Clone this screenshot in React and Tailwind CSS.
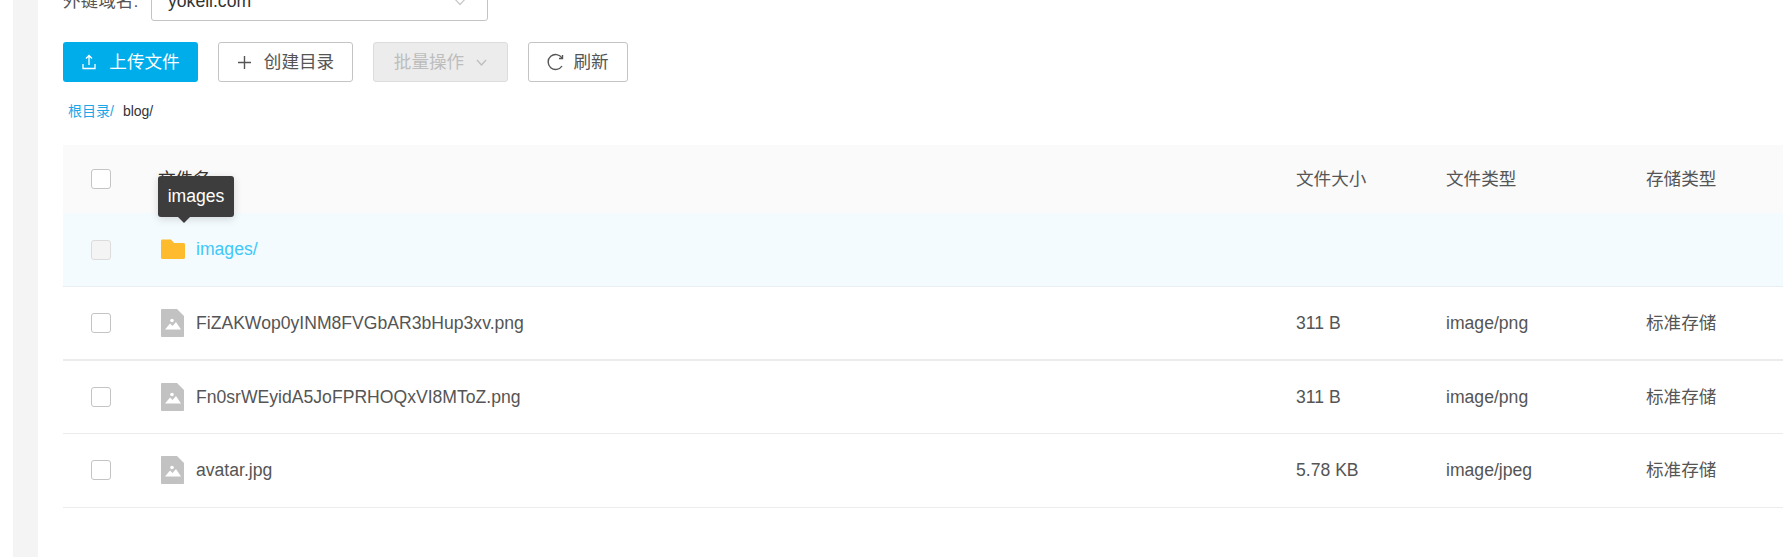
const sans = { };
function Check({ disabled }) {
  return <span className={`block w-5 h-5 rounded-[3px] border ${disabled ? "bg-[#f4f4f4] border-[#dcdcdc]" : "bg-white border-[#c4c4c4]"}`} />;
}
function FolderIcon() {
  return (
    <svg width="24" height="20" viewBox="0 0 24 20" className="shrink-0">
      <path d="M1.5 0.5H10L13 4H22.5C23.3 4 24 4.7 24 5.5V18.5C24 19.3 23.3 20 22.5 20H1.5C0.7 20 0 19.3 0 18.5V2C0 1.2 0.7 0.5 1.5 0.5Z" fill="#fdbb2d" />
    </svg>
  );
}
function FileIcon() {
  return (
    <svg width="23" height="28" viewBox="0 0 23 28" className="shrink-0">
      <path d="M1 0H16L23 7V27C23 27.6 22.6 28 22 28H1C0.4 28 0 27.6 0 27V1C0 0.4 0.4 0 1 0Z" fill="#c2c2c2" />
      <circle cx="11" cy="11.5" r="1.8" fill="#fff" />
      <path d="M4 20.5L9 14.5L11.5 17L15 13L20 20.5Z" fill="#fff" />
    </svg>
  );
}
const rows = [
  { name: "FiZAKWop0yINM8FVGbAR3bHup3xv.png", size: "311 B", type: "image/png", border: "border-b-2 border-[#ececec]" },
  { name: "Fn0srWEyidA5JoFPRHOQxVI8MToZ.png", size: "311 B", type: "image/png", border: "border-b border-[#ececec]" },
  { name: "avatar.jpg", size: "5.78 KB", type: "image/jpeg", border: "border-b border-[#ececec]" },
];
const grid = "grid grid-cols-[95px_1138px_150px_200px_1fr] items-center";
export default function App() {
  return (
    <div className="flex h-[557px] overflow-hidden bg-white text-[#555] text-[17.6px] font-['Liberation_Sans','Noto_Sans_CJK_SC',sans-serif]">
      <div className="w-[13px] shrink-0" />
      <div className="w-[25px] shrink-0 bg-[#f4f4f4]" />
      <div className="flex-1 min-w-0 pl-[25px]">
        <div className="flex items-center h-[40px] -mt-[19px] gap-2">
          <span className="w-[80px] whitespace-nowrap">外键域名:</span>
          <div className="w-[337px] h-[40px] box-border border border-[#c4c4c4] rounded-[3px] flex items-center justify-between px-4 text-[#333]">
            <span>yokell.com</span>
            <svg width="18" height="10" viewBox="0 0 18 10" fill="none" stroke="#c8c8c8" strokeWidth="1.2" className="mr-[2px]"><path d="M2 1L9 8.5L16 1" /></svg>
          </div>
        </div>
        <div className="flex gap-5 mt-[21px]">
          <button className="w-[135px] h-10 rounded-[3px] bg-[#00adeb] text-white flex items-center justify-center gap-3">
            <svg width="16" height="16" viewBox="0 0 16 16" fill="none" stroke="#fff" strokeWidth="1.3"><path d="M8 11V2M5 4.5L8 1.5L11 4.5M2 10V14.5H14V10" /></svg>
            <span>上传文件</span>
          </button>
          <button className="w-[135px] h-10 rounded-[3px] border border-[#c4c4c4] flex items-center justify-center gap-3">
            <svg width="15" height="15" viewBox="0 0 15 15" fill="none" stroke="#555" strokeWidth="1.4"><path d="M7.5 1V14M1 7.5H14" /></svg>
            <span>创建目录</span>
          </button>
          <button className="w-[135px] h-10 rounded-[3px] border border-[#dcdcdc] bg-[#ececec] text-[#bdbdbd] flex items-center justify-center gap-3">
            <span>批量操作</span>
            <svg width="11" height="7" viewBox="0 0 11 7" fill="none" stroke="#bdbdbd" strokeWidth="1.2"><path d="M1 1L5.5 6L10 1" /></svg>
          </button>
          <button className="w-[100px] h-10 rounded-[3px] border border-[#c4c4c4] flex items-center justify-center gap-2">
            <svg width="18" height="18" viewBox="0 0 18 18" fill="none" stroke="#555" strokeWidth="1.4"><path d="M15 5A7.5 7.5 0 1 0 15 13" /><path d="M15.5 2V5.5H12" /></svg>
            <span>刷新</span>
          </button>
        </div>
        <div className="flex items-center h-[63px] pb-[4px] pl-[5px] text-[14px]">
          <span className="text-[#1aa7e8] mr-[9px]">根目录/</span>
          <span className="text-[#333]">blog/</span>
        </div>
        <div className="relative">
          <div className={`${grid} h-[68px] bg-[#fafafa]`}>
            <div className="pl-[28px]"><Check /></div>
            <div className="text-[#333]">文件名</div>
            <div>文件大小</div>
            <div>文件类型</div>
            <div>存储类型</div>
          </div>
          <div className={`${grid} h-[74px] bg-[#f3fbfe] border-b border-[#e8eff2]`}>
            <div className="pl-[28px]"><Check disabled /></div>
            <div className="flex items-center gap-[11px] pl-[3px] text-[#40c8f8]"><FolderIcon /><span>images/</span></div>
          </div>
          {rows.map((r) => (
            <div key={r.name} className={`${grid} h-[73.5px] ${r.border}`}>
              <div className="pl-[28px]"><Check /></div>
              <div className="flex items-center gap-[12px] pl-[3px]"><FileIcon /><span>{r.name}</span></div>
              <div>{r.size}</div>
              <div>{r.type}</div>
              <div>标准存储</div>
            </div>
          ))}
          <div className="absolute left-[95px] top-[31px] w-[76px] h-[41px] bg-[#3d3d3d] rounded-[3px] text-white flex items-center justify-center shadow-[0_2px_8px_rgba(0,0,0,0.15)]">
            images
            <span className="absolute left-[20px] top-full w-0 h-0 border-x-[6px] border-x-transparent border-t-[6px] border-t-[#3d3d3d]" />
          </div>
        </div>
      </div>
    </div>
  );
}
